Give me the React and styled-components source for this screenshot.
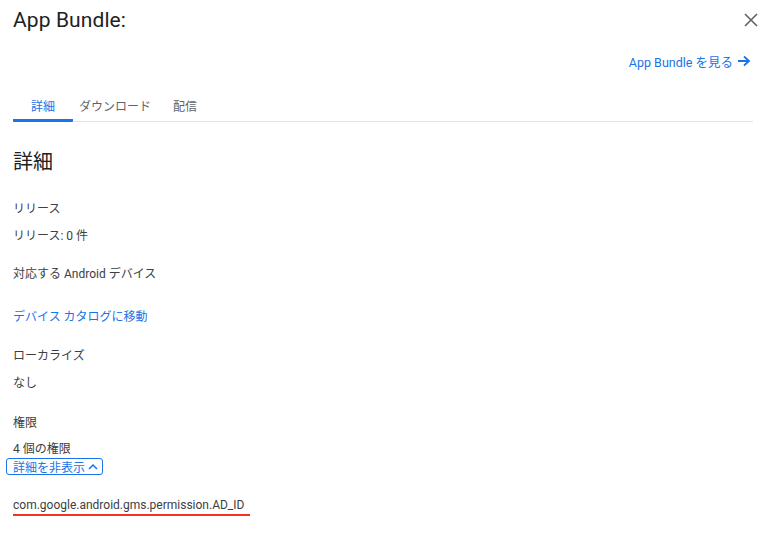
import React from "react";
import styled, { createGlobalStyle } from "styled-components";

const Global = createGlobalStyle`
  body {
    margin: 0;
    background: #fff;
    font-family: Roboto, "Noto Sans CJK JP", sans-serif;
    color: #3c4043;
  }
`;

const App = () => {
  return (
    <React.Fragment>
      <Global />
      <Page>
        <Header>
          <Title>App Bundle:</Title>
          <Close aria-label="close">
            <svg width="14" height="14" viewBox="0 0 14 14">
              <path d="M1 1L13 13M13 1L1 13" stroke="#5f6368" strokeWidth="1.6" />
            </svg>
          </Close>
        </Header>
        <LinkRow>
          <BlueLink>
            App Bundle を見る
            <svg width="14" height="12" viewBox="0 0 14 12">
              <path d="M1 6H12M7 1.5L12 6L7 10.5" stroke="#1a73e8" strokeWidth="1.8" fill="none" />
            </svg>
          </BlueLink>
        </LinkRow>
        <Tabs>
          <Tab active>詳細</Tab>
          <Tab>ダウンロード</Tab>
          <Tab>配信</Tab>
        </Tabs>
        <Heading>詳細</Heading>
        <Label top={25}>リリース</Label>
        <Value top={11}>リリース: 0 件</Value>
        <Label top={22}>対応する Android デバイス</Label>
        <TextLink top={27}>デバイス カタログに移動</TextLink>
        <Label top={23}>ローカライズ</Label>
        <Value top={11}>なし</Value>
        <Label top={24}>権限</Label>
        <Value top={10}>4 個の権限</Value>
        <ToggleRow>
          <Toggle>
            詳細を非表示
            <svg width="10" height="8" viewBox="0 0 10 8">
              <path d="M1 6L5 2L9 6" stroke="#1a73e8" strokeWidth="1.5" fill="none" />
            </svg>
          </Toggle>
        </ToggleRow>
        <Permission>com.google.android.gms.permission.AD_ID</Permission>
      </Page>
    </React.Fragment>
  );
};

export default App;

const Page = styled.div`
  width: 768px;
  height: 536px;
  box-sizing: border-box;
  padding: 0 15px 0 13px;
  overflow: hidden;
`;

const Header = styled.div`
  display: flex;
  align-items: center;
  justify-content: space-between;
  height: 40px;
`;

const Title = styled.h1`
  margin: 0;
  font-size: 21px;
  font-weight: 400;
  color: #202124;
  letter-spacing: 0.1px;
`;

const Close = styled.div`
  display: flex;
  width: 14px;
  height: 14px;
  margin-right: -5px;
`;

const LinkRow = styled.div`
  display: flex;
  justify-content: flex-end;
  margin-top: 12px;
  height: 18px;
`;

const BlueLink = styled.a`
  display: flex;
  align-items: center;
  gap: 4px;
  font-size: 12.5px;
  color: #1a73e8;
  font-weight: 400;
  margin-right: 2px;
`;

const Tabs = styled.div`
  display: flex;
  margin-top: 26px;
  border-bottom: 1px solid #e3e3e3;
`;

const Tab = styled.div`
  padding: 0 18px;
  height: 23px;
  line-height: 22px;
  font-size: 12px;
  color: ${(p) => (p.active ? "#1a73e8" : "#5f6368")};
  border-bottom: 3px solid ${(p) => (p.active ? "#1a73e8" : "transparent")};
  margin-bottom: -1px;
  border-radius: 1px;
  &:nth-child(2) {
    padding: 0 12px 0 6px;
  }
  &:nth-child(3) {
    padding: 0 12px 0 10px;
  }
`;

const Heading = styled.h2`
  margin: 26px 0 0 0;
  font-size: 20px;
  line-height: 28px;
  font-weight: 400;
  color: #202124;
`;

const Label = styled.div`
  margin-top: ${(p) => p.top}px;
  font-size: 12px;
  line-height: 16px;
  color: #3c4043;
`;

const Value = styled(Label)``;

const TextLink = styled(Label)`
  color: #1a73e8;
`;

const ToggleRow = styled.div`
  display: flex;
  margin-top: 1px;
`;

const Toggle = styled.button`
  display: inline-flex;
  align-items: center;
  gap: 3px;
  margin-left: -7px;
  padding: 0 4px 0 6px;
  height: 17px;
  box-sizing: border-box;
  border: 1.5px solid #1a73e8;
  border-radius: 3px;
  background: #fff;
  font-family: Roboto, "Noto Sans CJK JP", sans-serif;
  font-size: 12px;
  color: #1a73e8;
  cursor: pointer;
`;

const Permission = styled.div`
  margin-top: 22px;
  width: 237px;
  font-size: 12px;
  line-height: 16px;
  color: #3c4043;
  padding-bottom: 1px;
  border-bottom: 2px solid #f2331f;
`;
